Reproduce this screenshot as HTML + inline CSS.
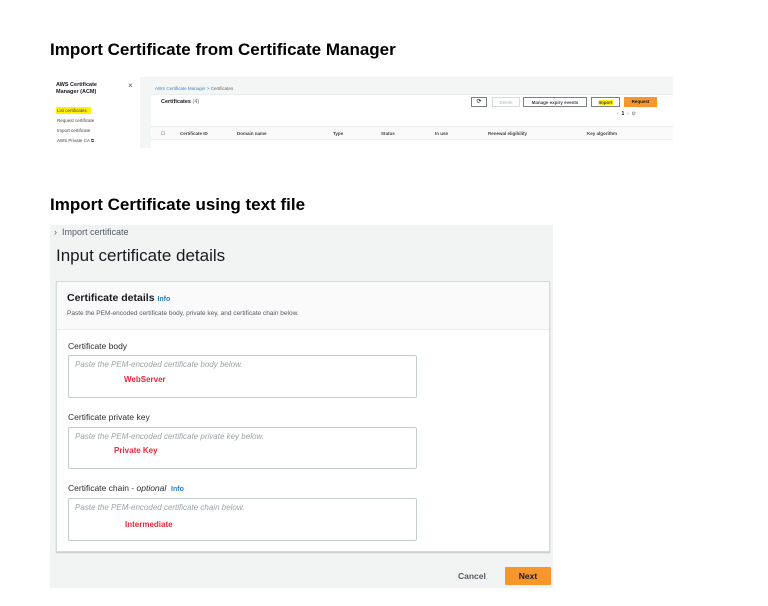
<!DOCTYPE html>
<html><head><style>
*{margin:0;padding:0;box-sizing:border-box}
body{width:768px;height:606px;background:#fff;font-family:"Liberation Sans",sans-serif;position:relative;overflow:hidden}
.a{position:absolute;white-space:nowrap}
h1{position:absolute;font-size:17px;font-weight:bold;color:#000;left:50px}
.t{font-size:4.5px;color:#444}
.ta{position:absolute;left:68px;width:349px;border:1px solid #c4cccd;background:#fff;border-radius:2px}
.ph{position:absolute;left:6px;top:4px;font-style:italic;color:#9aa5a6;font-size:8px}
.red{position:absolute;color:#e8283a;font-weight:bold;font-size:8px}
.lbl{position:absolute;left:68px;font-size:8.5px;color:#2a2e33}
.info{color:#2a7fc0;font-weight:bold;font-size:7px}
</style></head><body>
<h1 style="top:40px">Import Certificate from Certificate Manager</h1>
<div class="a" style="left:50px;top:77px;width:623px;height:71px;background:#f4f5f5"></div>
<div class="a" style="left:50px;top:77px;width:90px;height:71px;background:#fff"></div>
<div class="a" style="left:56px;top:82px;font-size:5.5px;font-weight:bold;color:#16191f;line-height:7px">AWS Certificate<br>Manager (ACM)</div>
<div class="a" style="left:128px;top:81px;font-size:8px;color:#555">×</div>
<div class="a" style="left:56px;top:107px;width:35px;height:7px;background:#ffef00"></div>
<div class="a t" style="left:57px;top:108px">List certificates</div>
<div class="a t" style="left:57px;top:118px">Request certificate</div>
<div class="a t" style="left:57px;top:128px">Import certificate</div>
<div class="a t" style="left:57px;top:138px">AWS Private CA ⧉</div>
<div class="a t" style="left:155px;top:86px;color:#3a87c8">AWS Certificate Manager  &gt;  <span style="color:#666">Certificates</span></div>
<div class="a" style="left:151px;top:94px;width:522px;height:54px;background:#fff;border-top:1px solid #eaeded"></div>
<div class="a" style="left:161px;top:99px;font-size:5.5px;font-weight:bold;color:#16191f">Certificates <span style="font-weight:normal;color:#687078">(4)</span></div>
<div class="a" style="left:471px;top:97px;width:16px;height:10px;border:1px solid #7a8086;background:#fff;font-size:6px;text-align:center">⟳</div>
<div class="a t" style="left:492px;top:97px;width:28px;height:10px;border:1px solid #d5dbdb;text-align:center;line-height:9px;color:#aab7b8">Delete</div>
<div class="a t" style="left:523px;top:97px;width:64px;height:10px;border:1px solid #7a8086;text-align:center;line-height:9px;font-weight:bold">Manage expiry events</div>
<div class="a t" style="left:591px;top:97px;width:29px;height:10px;border:1px solid #7a8086;text-align:center;line-height:9px;font-weight:bold"><span style="background:#ffef00">Import</span></div>
<div class="a t" style="left:624px;top:97px;width:33px;height:10px;background:#f7962b;text-align:center;line-height:10px;font-weight:bold;color:#16191f">Request</div>
<div class="a t" style="left:617px;top:111px;font-size:5px;color:#687078">‹ &nbsp;<b style="color:#000">1</b>&nbsp; › &nbsp;⚙</div>
<div class="a" style="left:151px;top:126px;width:522px;height:14px;background:#fafafa;border-top:1px solid #eaeded;border-bottom:1px solid #eaeded"></div>
<div class="a t" style="left:161px;top:131px">☐</div>
<div class="a t" style="left:180px;top:131px;font-weight:bold">Certificate ID</div>
<div class="a t" style="left:237px;top:131px;font-weight:bold">Domain name</div>
<div class="a t" style="left:333px;top:131px;font-weight:bold">Type</div>
<div class="a t" style="left:381px;top:131px;font-weight:bold">Status</div>
<div class="a t" style="left:435px;top:131px;font-weight:bold">In use</div>
<div class="a t" style="left:488px;top:131px;font-weight:bold">Renewal eligibility</div>
<div class="a t" style="left:587px;top:131px;font-weight:bold">Key algorithm</div>

<h1 style="top:195px">Import Certificate using text file</h1>
<div class="a" style="left:50px;top:225px;width:503px;height:363px;background:#f2f3f3"></div>
<div class="a" style="left:54px;top:227px;font-size:9px;color:#545b64">›&nbsp;&nbsp;Import certificate</div>
<div class="a" style="left:56px;top:246px;font-size:17px;color:#16191f">Input certificate details</div>
<div class="a" style="left:56px;top:281px;width:494px;height:271px;background:#fff;border:1px solid #d5dbdb;box-shadow:0 1px 1px rgba(0,0,0,.2)"></div>
<div class="a" style="left:57px;top:282px;width:492px;height:48px;background:#fafafa;border-bottom:1px solid #eaeded"></div>
<div class="a" style="left:67px;top:292px;font-size:10.5px;font-weight:bold;color:#16191f">Certificate details <span class="info">Info</span></div>
<div class="a" style="left:67px;top:310px;font-size:6.5px;color:#545b64">Paste the PEM-encoded certificate body, private key, and certificate chain below.</div>
<div class="lbl" style="top:341px">Certificate body</div>
<div class="ta" style="top:355px;height:43px"><div class="ph">Paste the PEM-encoded certificate body below.</div><div class="red" style="left:55px;top:19px">WebServer</div></div>
<div class="lbl" style="top:412px">Certificate private key</div>
<div class="ta" style="top:427px;height:42px"><div class="ph">Paste the PEM-encoded certificate private key below.</div><div class="red" style="left:45px;top:18px">Private Key</div></div>
<div class="lbl" style="top:483px">Certificate chain - <i>optional</i>&nbsp;&nbsp;<span class="info">Info</span></div>
<div class="ta" style="top:498px;height:43px"><div class="ph">Paste the PEM-encoded certificate chain below.</div><div class="red" style="left:56px;top:21px">Intermediate</div></div>
<div class="a" style="left:458px;top:571px;font-size:8.5px;font-weight:bold;color:#545b64">Cancel</div>
<div class="a" style="left:505px;top:567px;width:46px;height:18px;background:#f7962b;border-radius:1px;font-size:8.5px;font-weight:bold;color:#16191f;text-align:center;line-height:18px">Next</div>
</body></html>
